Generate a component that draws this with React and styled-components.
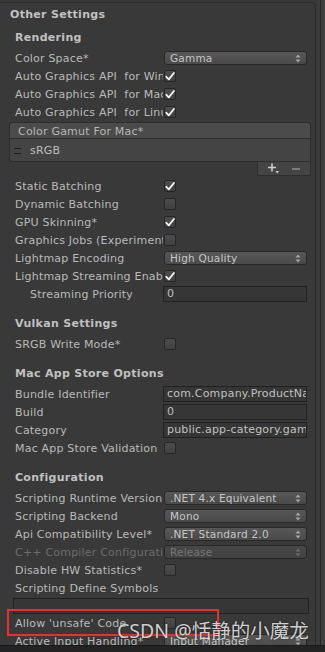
import React from 'react';
import styled, { createGlobalStyle } from 'styled-components';

const Global = createGlobalStyle`
  html, body {
    margin: 0;
    padding: 0;
    background: #383838;
    overflow: hidden;
  }
`;

const Page = styled.div`
  position: relative;
  width: 325px;
  height: 652px;
  display: flex;
  flex-direction: column;
  background: #383838;
  font-family: "DejaVu Sans", Verdana, sans-serif;
  font-size: 11px;
  letter-spacing: 0.2px;
  color: #bababa;
  overflow: hidden;
`;

const Main = styled.div`
  flex: 1;
  display: flex;
  min-height: 0;
`;

const Panel = styled.div`
  width: 316px;
  margin-top: 2px;
  padding: 3px 8px 0 10px;
  box-sizing: border-box;
  border-top: 1px solid #2c2c2c;
  border-right: 1px solid #2a2a2a;
  border-top-right-radius: 5px;
  background: #393939;
  overflow: hidden;
`;

const Gutter = styled.div`
  width: 4px;
  background: #3a3a3a;
  border-right: 1px solid #262626;
`;

const Outer = styled.div`
  flex: 1;
  background: #3f3f3f;
`;

const BottomBar = styled.div`
  height: 6px;
  background: #232323;
  border-top: 1px solid #1a1a1a;
`;

const Title = styled.div`
  height: 18px;
  line-height: 18px;
  font-weight: bold;
  color: #c2c2c2;
  letter-spacing: 0.3px;
`;

const Section = styled.div`
  padding-left: 5px;
  margin-top: ${p => p.$top}px;
`;

const SectionTitle = styled.div`
  height: 18px;
  line-height: 18px;
  font-weight: bold;
  color: #c0c0c0;
  letter-spacing: 0.3px;
  margin-bottom: 2px;
`;

const Row = styled.div`
  display: flex;
  align-items: center;
  height: 18px;
`;

const Label = styled.div`
  width: ${p => (p.$wide ? 'auto' : `${148 - (p.$indent ? 15 : 0)}px`)};
  margin-left: ${p => (p.$indent ? 15 : 0)}px;
  flex-shrink: 0;
  white-space: pre;
  overflow: hidden;
  color: ${p => (p.$disabled ? '#6c6c6c' : '#bababa')};
`;

const Check = styled.div`
  width: 12px;
  height: 12px;
  margin-left: 1px;
  box-sizing: border-box;
  border: 1px solid #262626;
  border-radius: 2px;
  background: linear-gradient(#4c4c4c, #404040);
  display: flex;
  align-items: center;
  justify-content: center;
`;

const Dropdown = styled.div`
  width: 143px;
  height: 14px;
  margin-left: 1px;
  box-sizing: border-box;
  border: 1px solid #282828;
  border-radius: 3px;
  background: ${p => (p.$disabled ? 'linear-gradient(#474747, #424242)' : 'linear-gradient(#575757, #4a4a4a)')};
  color: ${p => (p.$disabled ? '#767676' : '#c6c6c6')};
  display: flex;
  align-items: center;
  justify-content: space-between;
  padding: 0 5px 0 5px;
  font-size: 10.5px;
  line-height: 12px;
  white-space: nowrap;
  overflow: hidden;
`;

const Field = styled.div`
  width: 145px;
  height: 16px;
  box-sizing: border-box;
  border: 1px solid #212121;
  background: #363636;
  color: #c0c0c0;
  padding-left: 3px;
  line-height: 14px;
  white-space: nowrap;
  overflow: hidden;
`;

const WideField = styled(Field)`
  width: 296px;
  margin-left: -2px;
  margin-top: 1px;
`;

const List = styled.div`
  margin: 1px 0 1px -6px;
  width: 302px;
`;

const ListHeader = styled.div`
  height: 17px;
  line-height: 17px;
  padding-left: 8px;
  box-sizing: border-box;
  border: 1px solid #2d2d2d;
  border-radius: 3px 3px 0 0;
  background: #4b4b4b;
  color: #b6b6b6;
`;

const ListBody = styled.div`
  height: 23px;
  display: flex;
  align-items: center;
  box-sizing: border-box;
  border: 1px solid #2d2d2d;
  border-top: none;
  border-radius: 0 0 0 3px;
  background: #444444;
  color: #bcbcbc;
`;

const Handle = styled.div`
  width: 7px;
  height: 4px;
  margin: 2px 9px 0 4px;
  border-top: 1px solid #1e1e1e;
  border-bottom: 1px solid #1e1e1e;
`;

const Footer = styled.div`
  display: flex;
  justify-content: flex-end;
`;

const FooterTab = styled.div`
  width: 54px;
  height: 14px;
  box-sizing: border-box;
  border: 1px solid #2d2d2d;
  border-top: none;
  border-radius: 0 0 3px 3px;
  background: #444444;
  display: flex;
  align-items: center;
  justify-content: space-around;
  padding: 0 4px;
`;

const Overlay = styled.div`
  position: absolute;
  left: 7px;
  top: 609px;
  width: 212px;
  height: 27px;
  box-sizing: border-box;
  border: 2px solid #e8302e;
  pointer-events: none;
`;

const Watermark = styled.div`
  position: absolute;
  left: 117px;
  top: 615px;
  font-family: "Noto Sans", "Noto Sans CJK SC", sans-serif;
  font-size: 19.5px;
  letter-spacing: 0;
  color: rgba(240, 240, 240, 0.85);
  text-shadow: 0 0 2px rgba(0, 0, 0, 0.6);
  white-space: nowrap;
`;

const Tick = () => (
  <svg width="11" height="11" viewBox="0 0 11 11">
    <path d="M1.5 5.8 L4.2 8.6 L9.8 1.6" fill="none" stroke="#f2f2f2" strokeWidth="2" strokeLinecap="round" strokeLinejoin="round" />
  </svg>
);

const Arrows = ({ dim }) => (
  <svg width="6" height="9" viewBox="0 0 6 9">
    <path d="M3 0.5 L5.5 3.5 L0.5 3.5 Z M3 8.5 L5.5 5.5 L0.5 5.5 Z" fill={dim ? '#6a6a6a' : '#a8a8a8'} />
  </svg>
);

const PlusIcon = () => (
  <svg width="14" height="11" viewBox="0 0 14 11">
    <path d="M1 4.5 H9 M5 0.5 V8.5" stroke="#cfcfcf" strokeWidth="1.6" />
    <path d="M8.5 8 L12 8 L10.25 10.5 Z" fill="#cfcfcf" />
  </svg>
);

const MinusIcon = () => (
  <svg width="10" height="10" viewBox="0 0 10 10">
    <path d="M1 5 H9" stroke="#8c8c8c" strokeWidth="1.6" />
  </svg>
);

function CheckRow({ label, on, indent }) {
  return (
    <Row>
      <Label $indent={indent}>{label}</Label>
      <Check>{on && <Tick />}</Check>
    </Row>
  );
}

function DropRow({ label, value, disabled }) {
  return (
    <Row>
      <Label $disabled={disabled}>{label}</Label>
      <Dropdown $disabled={disabled}>
        <span>{value}</span>
        <Arrows dim={disabled} />
      </Dropdown>
    </Row>
  );
}

function FieldRow({ label, value, indent }) {
  return (
    <Row>
      <Label $indent={indent}>{label}</Label>
      <Field>{value}</Field>
    </Row>
  );
}

export default function App() {
  return (
    <Page>
      <Global />
      <Main>
        <Panel>
          <Title>Other Settings</Title>

          <Section $top={5}>
            <SectionTitle>Rendering</SectionTitle>
            <DropRow label="Color Space*" value="Gamma" />
            <CheckRow label="Auto Graphics API  for Windows" on />
            <CheckRow label="Auto Graphics API  for Mac" on />
            <CheckRow label="Auto Graphics API  for Linux" on />
            <List>
              <ListHeader>Color Gamut For Mac*</ListHeader>
              <ListBody>
                <Handle />
                sRGB
              </ListBody>
              <Footer>
                <FooterTab>
                  <PlusIcon />
                  <MinusIcon />
                </FooterTab>
              </Footer>
            </List>
            <CheckRow label="Static Batching" on />
            <CheckRow label="Dynamic Batching" />
            <CheckRow label="GPU Skinning*" on />
            <CheckRow label="Graphics Jobs (Experimental)*" />
            <DropRow label="Lightmap Encoding" value="High Quality" />
            <CheckRow label="Lightmap Streaming Enabled" on />
            <FieldRow label="Streaming Priority" value="0" indent />
          </Section>

          <Section $top={12}>
            <SectionTitle>Vulkan Settings</SectionTitle>
            <CheckRow label="SRGB Write Mode*" />
          </Section>

          <Section $top={12}>
            <SectionTitle>Mac App Store Options</SectionTitle>
            <FieldRow label="Bundle Identifier" value="com.Company.ProductName" />
            <FieldRow label="Build" value="0" />
            <FieldRow label="Category" value="public.app-category.games" />
            <CheckRow label="Mac App Store Validation" />
          </Section>

          <Section $top={12}>
            <SectionTitle>Configuration</SectionTitle>
            <DropRow label="Scripting Runtime Version" value=".NET 4.x Equivalent" />
            <DropRow label="Scripting Backend" value="Mono" />
            <DropRow label="Api Compatibility Level*" value=".NET Standard 2.0" />
            <DropRow label="C++ Compiler Configuration" value="Release" disabled />
            <CheckRow label="Disable HW Statistics*" />
            <Row>
              <Label $wide>Scripting Define Symbols</Label>
            </Row>
            <WideField />
            <CheckRow label="Allow 'unsafe' Code" />
            <DropRow label="Active Input Handling*" value="Input Manager" />
          </Section>
        </Panel>
        <Gutter />
        <Outer />
      </Main>
      <BottomBar />
      <Overlay />
      <Watermark>CSDN @恬静的小魔龙</Watermark>
    </Page>
  );
}
